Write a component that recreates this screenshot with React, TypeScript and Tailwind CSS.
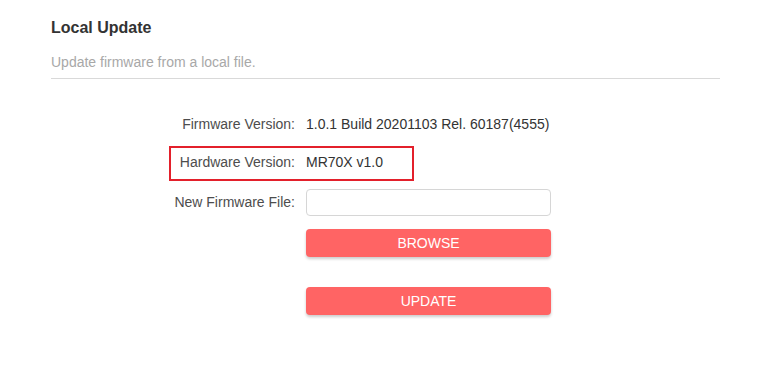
import React from 'react';

function Row({ label, children, highlight }: { label: string; children: React.ReactNode; highlight?: boolean }) {
  return (
    <div className="relative flex items-center h-[38px]">
      <div className="w-[244px] text-right text-[14px] text-[#4d4d4d]">{label}</div>
      <div className="ml-[11px] text-[14px] text-[#333]">{children}</div>
      {highlight && (
        <div className="absolute left-[118px] top-[3px] w-[245px] h-[35px] border-2 border-[#e3202b]" />
      )}
    </div>
  );
}

export default function App() {
  return (
    <div className="w-[784px] h-[365px] bg-white pl-[51px] pr-[64px] font-['Liberation_Sans',Arial,sans-serif]">
      {/* Header */}
      <div className="pt-[16px] text-[16px] leading-[24px] font-bold text-[#333]">Local Update</div>
      <div className="mt-[12px] pb-[6px] text-[14px] leading-[20px] text-[#a8a8a8] border-b border-[#d9d9d9]">
        Update firmware from a local file.
      </div>

      {/* Form */}
      <div className="mt-[26px]">
        <Row label="Firmware Version:">1.0.1 Build 20201103 Rel. 60187(4555)</Row>
        <Row label="Hardware Version:" highlight>MR70X v1.0</Row>

        <div className="flex items-center mt-[8px]">
          <div className="w-[244px] text-right text-[14px] text-[#4d4d4d]">New Firmware File:</div>
          <input
            type="text"
            className="ml-[11px] w-[245px] h-[27px] border border-[#d6d6d6] rounded-[4px] outline-none"
          />
        </div>

        <div className="ml-[255px] w-[245px]">
          <button className="mt-[13px] w-full h-[28px] rounded-[4px] bg-[#ff6464] text-white text-[14px] shadow-[0_2px_3px_rgba(0,0,0,0.2)]">
            BROWSE
          </button>
          <button className="mt-[30px] w-full h-[28px] rounded-[4px] bg-[#ff6464] text-white text-[14px] shadow-[0_2px_3px_rgba(0,0,0,0.2)]">
            UPDATE
          </button>
        </div>
      </div>
    </div>
  );
}
